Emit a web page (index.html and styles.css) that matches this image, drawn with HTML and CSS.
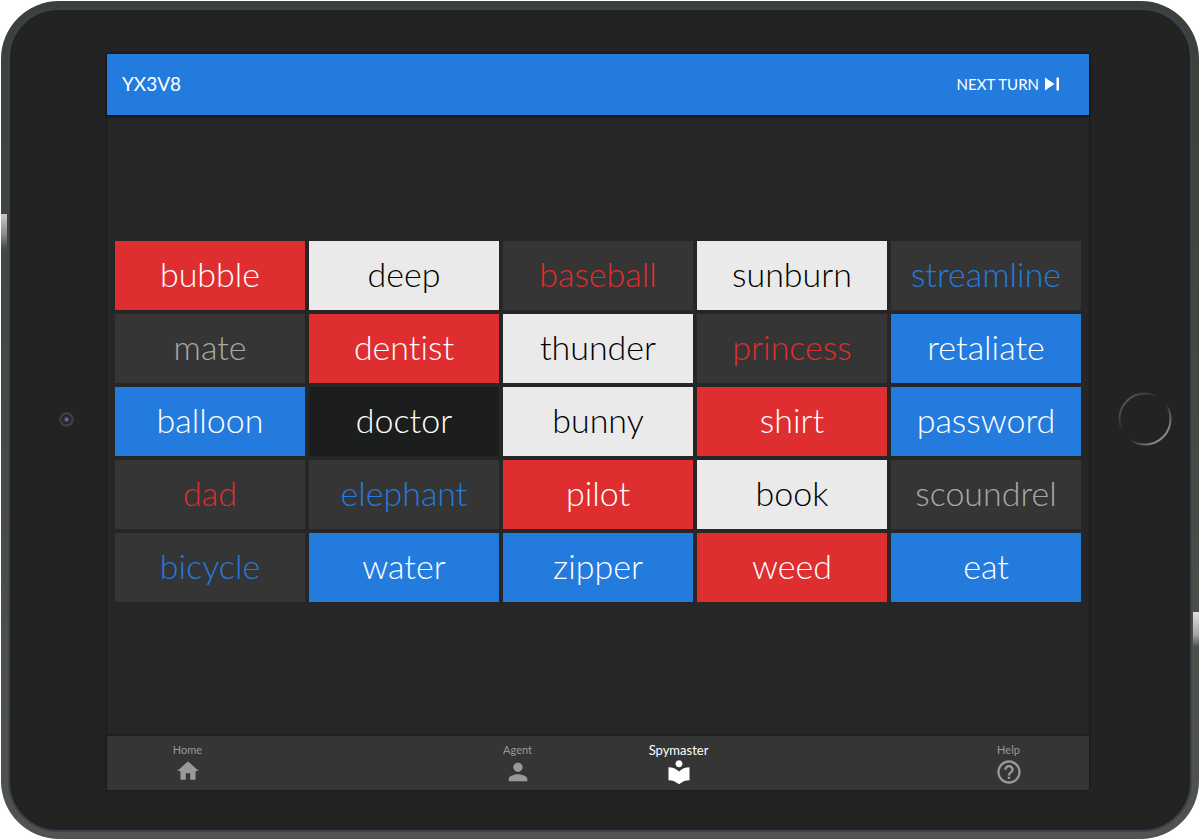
FILE: index.html
```
<!DOCTYPE html>
<html lang="en">
<head>
    <meta charset="UTF-8">
    <meta name="viewport" content="width=device-width, initial-scale=1.0">
    <title>YX3V8 - Spymaster</title>
    <link rel="stylesheet" href="styles.css">
</head>
<body>
    <div class="device">
        <div class="bezel">
            <div class="side side-left">
                <div class="camera"></div>
            </div>

            <div class="screen">
                <header class="header">
                    <h1>YX3V8</h1>
                    <button class="next-turn" type="button">
                        NEXT TURN
                        <svg width="24" height="24" viewBox="0 0 24 24"><path d="M4 18.500V5.500l9.500 6.500zM15.500 5.500h2.500v13h-2.500z"/></svg>
                    </button>
                </header>

                <main class="board">
                    <div class="grid">
                        <button class="card red">bubble</button>
                        <button class="card neutral">deep</button>
                        <button class="card hidden-red">baseball</button>
                        <button class="card neutral">sunburn</button>
                        <button class="card hidden-blue">streamline</button>

                        <button class="card">mate</button>
                        <button class="card red">dentist</button>
                        <button class="card neutral">thunder</button>
                        <button class="card hidden-red">princess</button>
                        <button class="card blue">retaliate</button>

                        <button class="card blue">balloon</button>
                        <button class="card assassin">doctor</button>
                        <button class="card neutral">bunny</button>
                        <button class="card red">shirt</button>
                        <button class="card blue">password</button>

                        <button class="card hidden-red">dad</button>
                        <button class="card hidden-blue">elephant</button>
                        <button class="card red">pilot</button>
                        <button class="card neutral">book</button>
                        <button class="card">scoundrel</button>

                        <button class="card hidden-blue">bicycle</button>
                        <button class="card blue">water</button>
                        <button class="card blue">zipper</button>
                        <button class="card red">weed</button>
                        <button class="card blue">eat</button>
                    </div>
                </main>

                <nav class="tabs">
                    <a class="tab" href="#home">
                        <span>Home</span>
                        <svg width="26" height="26" viewBox="0 0 24 24"><path d="M10 20v-6h4v6h5v-8h3L12 3 2 12h3v8z"/></svg>
                    </a>
                    <div class="tab-group">
                        <a class="tab" href="#agent">
                            <span>Agent</span>
                            <svg width="28" height="28" viewBox="0 0 24 24"><path d="M12 12c2.210 0 4-1.790 4-4s-1.790-4-4-4-4 1.790-4 4 1.790 4 4 4zm0 2c-2.670 0-8 1.340-8 4v2h16v-2c0-2.660-5.330-4-8-4z"/></svg>
                        </a>
                        <a class="tab active" href="#spymaster">
                            <span>Spymaster</span>
                            <svg width="28" height="28" viewBox="0 0 24 24"><path d="M12 11.550C9.640 9.350 6.480 8 3 8v11c3.480 0 6.640 1.350 9 3.550 2.360-2.190 5.520-3.550 9-3.550V8c-3.480 0-6.640 1.350-9 3.550zM12 8c1.660 0 3-1.340 3-3s-1.340-3-3-3-3 1.340-3 3 1.340 3 3 3z"/></svg>
                        </a>
                    </div>
                    <a class="tab" href="#help">
                        <span>Help</span>
                        <svg width="28" height="28" viewBox="0 0 24 24"><path d="M11 18h2v-2h-2v2zm1-16C6.480 2 2 6.480 2 12s4.480 10 10 10 10-4.480 10-10S17.520 2 12 2zm0 18c-4.410 0-8-3.590-8-8s3.590-8 8-8 8 3.590 8 8-3.590 8-8 8zm0-14c-2.210 0-4 1.790-4 4h2c0-1.100.9-2 2-2s2 .9 2 2c0 2-3 1.750-3 5h2c0-2.250 3-2.500 3-5 0-2.210-1.790-4-4-4z"/></svg>
                    </a>
                </nav>
            </div>

            <div class="side side-right">
                <svg class="home-button" width="54" height="54" viewBox="0 0 54 54">
                    <defs>
                        <linearGradient id="ring" x1="0" y1="0" x2="1" y2="1">
                            <stop offset="0.1" stop-color="#5c5c5c"/>
                            <stop offset="0.4" stop-color="#232323"/>
                            <stop offset="0.55" stop-color="#232323"/>
                            <stop offset="0.85" stop-color="#8c8c8c"/>
                        </linearGradient>
                    </defs>
                    <circle cx="27" cy="27" r="25.500" fill="none" stroke="url(#ring)" stroke-width="2"/>
                </svg>
            </div>
        </div>
        <div class="glint glint-left"></div>
        <div class="glint glint-right"></div>
    </div>
</body>
</html>
```
FILE: styles.css
```
* {
    margin: 0;
    padding: 0;
    box-sizing: border-box;
}

body {
    font-family: Lato, 'Open Sans', sans-serif;
    font-variant-ligatures: none;
    background: white;
    min-height: 100vh;
    padding: 1px;
    display: flex;
}

button {
    font-family: inherit;
    font-variant-ligatures: inherit;
    border: none;
    cursor: pointer;
}

/* tablet frame */
.device {
    position: relative;
    flex: 1;
    display: flex;
    padding: 7px;
    border-radius: 58px;
    background: linear-gradient(#3b403a, #50534f);
    overflow: hidden;
}

.bezel {
    flex: 1;
    display: flex;
    padding: 44px 0 40px;
    border: 2px solid #3c4250;
    border-radius: 50px;
    background: #232323;
}

.side {
    flex-shrink: 0;
    display: flex;
    align-items: center;
    justify-content: center;
}

.side-left {
    width: 97px;
    padding: 0 0 6px 16px;
}

.side-right {
    width: 101px;
    padding: 0 0 6px 10px;
}

.camera {
    width: 15px;
    height: 15px;
    border-radius: 50%;
    background: radial-gradient(circle closest-side, #777 0 1px, #3b2f62 2px 3px, #18181c 4px, #3c3c3c 5px 7px, transparent 8px);
}

.home-button {
    display: block;
}

.glint {
    position: absolute;
    width: 6px;
    height: 50px;
}

.glint-left {
    left: 0;
    top: 213px;
    background: linear-gradient(#c8caca, #8a8c8a 40%, #454a46 70%, transparent);
}

.glint-right {
    right: 0;
    top: 611px;
    background: linear-gradient(#e0e0e0, #a5a5a5 45%, #4c504c 70%, transparent);
}

/* app */
.screen {
    flex: 1;
    min-width: 0;
    display: flex;
    flex-direction: column;
    background: #262626;
    box-shadow: 0 0 2px #111;
}

.header {
    display: flex;
    align-items: center;
    justify-content: space-between;
    height: 61px;
    padding: 0 24px 2px 15px;
    background: #247bde;
    color: white;
    box-shadow: 0 1px 3px rgba(0,0,0,0.7);
}

.header h1 {
    font-size: 19px;
    font-weight: 400;
}

.next-turn {
    display: flex;
    align-items: center;
    gap: 2px;
    background: none;
    color: white;
    font-size: 15px;
}

svg {
    fill: currentColor;
}

.board {
    flex: 1;
    display: flex;
    align-items: center;
    padding: 0 8px 8px;
}

.grid {
    flex: 1;
    display: grid;
    grid-template-columns: repeat(5, 1fr);
    gap: 4px;
}

.card {
    height: 69px;
    min-width: 0;
    padding-bottom: 4px;
    background: #353535;
    color: #a8a8a8;
    font-size: 34px;
    font-weight: 300;
}

.card.red {
    background: #df2e30;
    color: white;
}

.card.blue {
    background: #247bde;
    color: white;
}

.card.neutral {
    background: #eaeaea;
    color: black;
}

.card.assassin {
    background: #1c1e1d;
    color: white;
}

.card.hidden-red {
    color: #df2e30;
}

.card.hidden-blue {
    color: #247bde;
}

.tabs {
    display: flex;
    justify-content: space-between;
    height: 54px;
    background: #353535;
    box-shadow: 0 -1px 2px rgba(0,0,0,0.3);
}

.tab-group {
    display: flex;
}

.tab {
    width: 161px;
    display: flex;
    flex-direction: column;
    align-items: center;
    padding-top: 6px;
    color: #999;
    font-size: 11px;
    line-height: 16px;
    text-decoration: none;
}

.tab.active {
    color: white;
    font-size: 13px;
}
```
